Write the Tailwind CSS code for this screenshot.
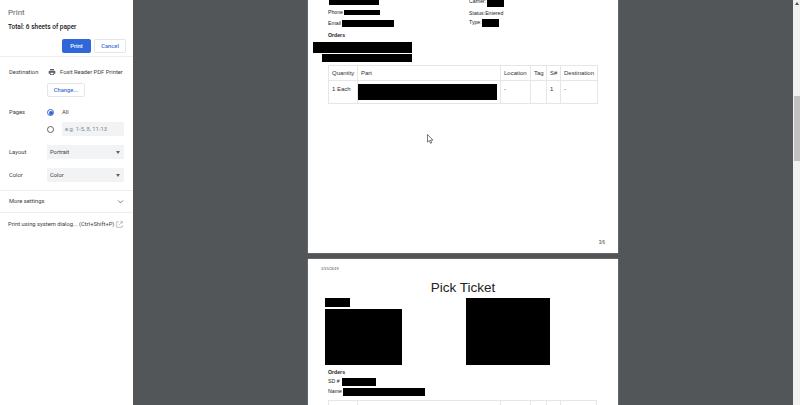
<!DOCTYPE html>
<html><head><meta charset="utf-8">
<script src="https://cdn.jsdelivr.net/npm/@tailwindcss/browser@4"></script>
</head>
<body class="m-0 overflow-hidden">
<div class="relative flex h-[405px] w-[800px] overflow-hidden bg-[#525659] font-['Roboto',sans-serif]">
  <!-- Sidebar -->
  <aside class="flex h-full w-[133px] shrink-0 flex-col bg-white text-[5.8px] text-[#3c4043]">
    <div class="h-[57px] shrink-0 border-b border-[#eceef0]">
      <div class="pl-[8px] pt-[7px] text-[8px] leading-[12px] text-[#5f6368]">Print</div>
      <div class="pl-[8px] pt-[3px] text-[6.5px] leading-[10px] font-medium text-[#202124]">Total: 6 sheets of paper</div>
      <div class="flex justify-end gap-[3px] pr-[7px] pt-[7px]">
        <div class="flex h-[14px] w-[29px] items-center justify-center rounded-[2px] bg-[#2f66d8] font-medium text-white">Print</div>
        <div class="flex h-[14px] w-[32px] items-center justify-center rounded-[2px] border border-[#e4e7ea] font-medium text-[#3f6fd8]">Cancel</div>
      </div>
    </div>
    <div class="mt-[8px] flex h-[14px] items-center pl-[9px]">
      <span class="w-[39px]">Destination</span>
      <svg class="mr-[4px] h-[8px] w-[8px]" viewBox="0 0 24 24" fill="#5f6368"><path d="M19 8H5c-1.66 0-3 1.34-3 3v6h4v4h12v-4h4v-6c0-1.66-1.34-3-3-3zm-3 11H8v-5h8v5zM18 3H6v4h12V3z"/></svg>
      <span>Foxit Reader PDF Printer</span>
    </div>
    <div class="mt-[4px] pl-[47px]">
      <div class="flex h-[14px] w-[38px] items-center justify-center rounded-[2px] border border-[#e4e7ea] font-medium text-[#3f6fd8]">Change...</div>
    </div>
    <div class="mt-[12px] flex h-[7px] items-center pl-[9px]">
      <span class="w-[38px]">Pages</span>
      <span class="mr-[8px] flex h-[7px] w-[7px] items-center justify-center rounded-full border border-[#2f66d8]"><span class="h-[4px] w-[4px] rounded-full bg-[#2f66d8]"></span></span>
      <span>All</span>
    </div>
    <div class="mt-[6px] flex items-center pl-[47px]">
      <span class="mr-[8px] h-[7px] w-[7px] rounded-full border border-[#5f6368]"></span>
      <div class="flex h-[14px] w-[62px] items-center bg-[#f1f3f4] pl-[3px] text-[#80868b]">e.g. 1-5, 8, 11-13</div>
    </div>
    <div class="mt-[9px] flex items-center pl-[9px]">
      <span class="w-[38px]">Layout</span>
      <div class="flex h-[14px] w-[77px] items-center justify-between bg-[#f1f3f4] pl-[3px] pr-[4px]"><span>Portrait</span><span class="h-0 w-0 border-x-[2.5px] border-t-[3px] border-x-transparent border-t-[#5f6368]"></span></div>
    </div>
    <div class="mt-[9px] flex items-center pl-[9px]">
      <span class="w-[38px]">Color</span>
      <div class="flex h-[14px] w-[77px] items-center justify-between bg-[#f1f3f4] pl-[3px] pr-[4px]"><span>Color</span><span class="h-0 w-0 border-x-[2.5px] border-t-[3px] border-x-transparent border-t-[#5f6368]"></span></div>
    </div>
    <div class="mt-[8px] box-content flex h-[21px] items-center justify-between border-y border-[#eceef0] px-[9px]">
      <span>More settings</span>
      <svg class="h-[7px] w-[7px]" viewBox="0 0 10 10" fill="none" stroke="#5f6368" stroke-width="1.2"><path d="M1.5 3.5 5 7l3.5-3.5"/></svg>
    </div>
    <div class="flex h-[23px] items-center justify-between pl-[8px] pr-[10px]">
      <span class="whitespace-nowrap">Print using system dialog... (Ctrl+Shift+P)</span>
      <svg class="h-[7px] w-[7px]" viewBox="0 0 10 10" fill="none" stroke="#9aa0a6" stroke-width="0.9"><path d="M4 1H1v8h8V6M6 1h3v3M9 1 4.5 5.5"/></svg>
    </div>
  </aside>

  <!-- Viewer -->
  <main class="flex h-full flex-1 flex-col items-center gap-[6px] overflow-hidden pl-[7px] pr-[7px] font-['Liberation_Sans',sans-serif] text-[5.2px] text-[#222]">
    <!-- Page 1 -->
    <section class="relative h-[252.5px] w-[310px] shrink-0 bg-white shadow-[0_0_1px_#bbb]">
      <div class="grid grid-cols-[141px_1fr] pl-[20px]">
        <div class="flex flex-col">
          <div class="ml-[1px] h-[5px] w-[50px] bg-black"></div>
          <div class="mt-[5px] flex h-[5px] items-center">Phone<span class="ml-[1px] h-[5px] w-[36px] bg-black"></span></div>
          <div class="mt-[5px] flex h-[7px] items-center">Email<span class="ml-[1px] h-[7px] w-[52px] bg-black"></span></div>
        </div>
        <div class="flex flex-col">
          <div class="-mb-[2px] flex h-[7px] items-center"><span class="-translate-y-[2px]">Carrier:</span><span class="ml-[1px] h-[7px] w-[17px] bg-black"></span></div>
          <div class="mt-[5px] flex h-[5px] translate-y-[1px] items-center">Status:Entered</div>
          <div class="mt-[4px] flex h-[8px] items-center">Type:<span class="h-[8px] w-[17px] bg-black"></span></div>
        </div>
      </div>
      <div class="pl-[20px] pt-[4px] font-bold leading-[8px]">Orders</div>
      <div class="ml-[5px] mt-[3px] h-[11px] w-[99px] bg-black"></div>
      <div class="ml-[14px] mt-[1px] h-[8px] w-[90px] bg-black"></div>
      <table class="ml-[20px] mt-[3px] w-[269px] table-fixed border-collapse text-[6px] text-[#333]">
        <colgroup><col class="w-[29px]"><col class="w-[143px]"><col class="w-[30px]"><col class="w-[16px]"><col class="w-[14px]"><col class="w-[37px]"></colgroup>
        <tbody>
          <tr class="h-[15px]">
            <td class="border border-[#e6e6e6] pl-[3px]">Quantity</td><td class="border border-[#e6e6e6] pl-[3px]">Part</td><td class="border border-[#e6e6e6] pl-[3px]">Location</td><td class="border border-[#e6e6e6] pl-[3px]">Tag</td><td class="border border-[#e6e6e6] pl-[3px]">S#</td><td class="border border-[#e6e6e6] pl-[3px]">Destination</td>
          </tr>
          <tr class="h-[23px] align-top">
            <td class="border border-[#e6e6e6] pl-[3px] pt-[4px]">1 Each</td>
            <td class="border border-[#e6e6e6] pl-0 pt-[3px]"><div class="h-[16px] w-[139px] bg-black"></div></td>
            <td class="border border-[#e6e6e6] pl-[3px] pt-[4px]">-</td><td class="border border-[#e6e6e6]"></td><td class="border border-[#e6e6e6] pl-[3px] pt-[4px]">1</td><td class="border border-[#e6e6e6] pl-[3px] pt-[4px]">-</td>
          </tr>
        </tbody>
      </table>
      <div class="absolute bottom-[6px] right-[13px] text-[4.5px] text-[#444]">3/6</div>
    </section>
    <!-- Page 2 -->
    <section class="h-[160px] w-[310px] shrink-0 bg-white shadow-[0_0_1px_#bbb]">
      <div class="pl-[13px] pt-[7px] text-[4px] leading-[6px] text-[#444]">1/15/2019</div>
      <div class="pt-[7px] text-center text-[13.5px] leading-[17px] text-[#222]">Pick Ticket</div>
      <div class="mt-[2px] flex pl-[17px]">
        <div class="w-[141px]">
          <div class="h-[9px] w-[25px] bg-black"></div>
          <div class="mt-[2px] h-[56px] w-[77px] bg-black"></div>
        </div>
        <div class="h-[67px] w-[84px] bg-black"></div>
      </div>
      <div class="pl-[20px] pt-[3px] font-bold leading-[8px]">Orders</div>
      <div class="ml-[20px] mt-[2px] flex h-[8px] items-center">SD #<span class="ml-[2px] h-[8px] w-[34px] bg-black"></span></div>
      <div class="ml-[20px] mt-[2px] flex h-[8px] items-center">Name<span class="ml-[1px] h-[8px] w-[82px] bg-black"></span></div>
      <div class="ml-[20px] mt-[4px] grid h-[8px] w-[269px] grid-cols-[29px_143px_30px_16px_14px_37px] border-t border-[#e6e6e6]">
        <span class="border-l border-[#e6e6e6]"></span><span class="border-l border-[#e6e6e6]"></span><span class="border-l border-[#e6e6e6]"></span><span class="border-l border-[#e6e6e6]"></span><span class="border-l border-[#e6e6e6]"></span><span class="border-x border-[#e6e6e6]"></span>
      </div>
    </section>
  </main>

  <!-- Scrollbar -->
  <div class="flex h-full w-[7px] shrink-0 flex-col items-center bg-[#f1f1f1]">
    <div class="flex h-[7px] items-center"><span class="h-0 w-0 border-x-[2px] border-b-[3px] border-x-transparent border-b-[#505050]"></span></div>
    <div class="mt-[89px] h-[65px] w-[6px] bg-[#c1c1c1]"></div>
  </div>

  <!-- Cursor -->
  <svg class="absolute left-[427px] top-[134px] h-[10px] w-[7px]" viewBox="0 0 7 10"><path d="M.5.5v7.6l1.8-1.6 1.2 2.8 1.2-.5-1.2-2.7h2.4z" fill="#fff" stroke="#222" stroke-width=".6"/></svg>
</div>
</body></html>
